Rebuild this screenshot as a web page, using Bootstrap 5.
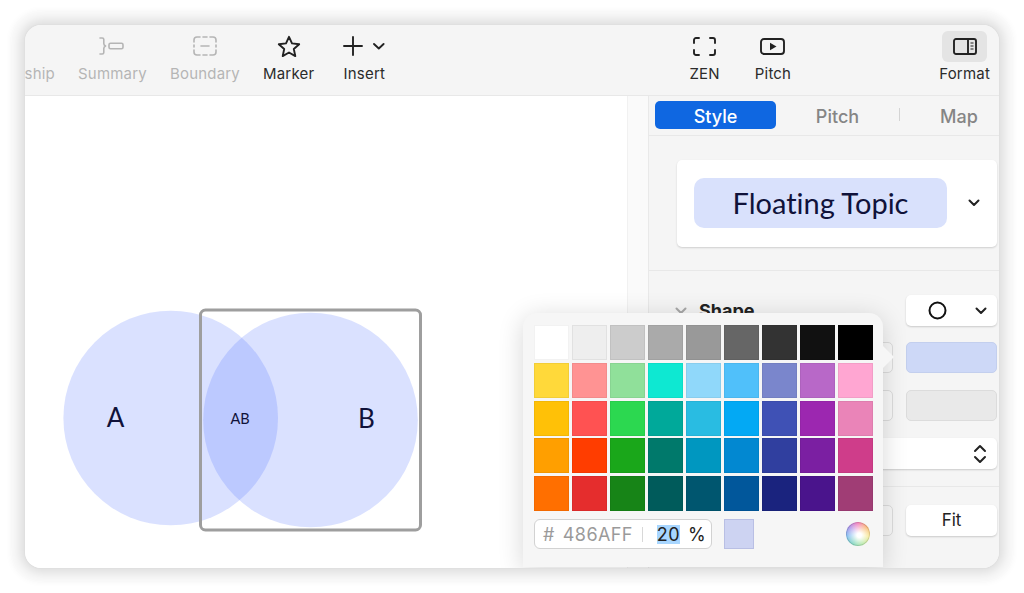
<!DOCTYPE html>
<html lang="en">
<head>
  <meta charset="UTF-8" />
  <meta name="viewport" content="width=device-width, initial-scale=1.0"/>
  <title>Venn diagram - Format panel</title>
  <link href="https://cdn.jsdelivr.net/npm/bootstrap@5.3.2/dist/css/bootstrap.min.css" rel="stylesheet"/>
  <style>
    html, body { height: 593px; overflow: hidden; }
    body { background: #fff; padding: 25px; font-family: Inter, "Liberation Sans", sans-serif; color: #222; }

    .app-window {
      width: 974px; height: 543px; border-radius: 16px; overflow: hidden; background: #f5f5f5;
      box-shadow: 0 0 0 1px #e0e0e0, 0 0 12px 5px rgba(0, 0, 0, .12), 0 0 5px 16px #fafafa;
    }

    .app-toolbar { height: 71px; flex: none; background: #f5f5f5; border-bottom: 1px solid #e8e8e8; padding-right: 9px; }
    .tool-left { gap: 23px; margin-left: -12px; }
    .tool-right { margin-left: auto; }
    .tool-item { height: 70px; font-size: 15px; letter-spacing: .2px; line-height: 18px; color: #2b2b2b; }
    .tool-item.is-off { color: #b5b5b5; }
    .tool-ico { height: 38px; display: flex; align-items: center; justify-content: center; margin-top: 2px; }
    .tool-clip { width: 42px; text-align: right; }
    .tool-zen { margin-right: 35px; }
    .tool-pitch { margin-right: 148px; }
    .tool-active { width: 45px; height: 31px; border-radius: 6px; background: #e4e4e4; margin-top: 6px; margin-bottom: 3px; }
    .tool-insert { margin-left: 6px; }

    .app-canvas { width: 602px; flex: none; background: #fff; position: relative; }
    .app-gutter { width: 22px; flex: none; background: #fafafa; border-left: 1px solid #f1f1f1; border-right: 1px solid #e9e9e9; }
    .app-panel { flex: 1 1 auto; background: #f5f5f5; min-width: 0; }

    .venn-art { position: absolute; left: 0; top: 0; }
    .venn-label { font-family: Lato, "Open Sans", sans-serif; fill: #10123a; }

    .panel-tabs { height: 40px; border-bottom: 1px solid #e8e8e8; padding: 5px 0 0 6px; font-size: 18px; font-weight: 500; color: #858585; }
    .panel-tab { height: 28px; line-height: 31px; text-align: center; flex: none; }
    .panel-tab.is-on { width: 121px; background: #0f67e1; color: #fff; border-radius: 5px; font-weight: 500; }
    .panel-tab.t-pitch { width: 123px; }
    .panel-tab.t-sep { width: 1px; height: 13px; background: #d4d4d4; margin-top: 7px; }
    .panel-tab.t-map { flex: 1 1 auto; padding-left: 19px; }

    .topic-card { margin: 24px 2px 0 28px; height: 87px; padding: 18px 0 0 17px; background: #fff; border-radius: 5px; box-shadow: 0 1px 2px rgba(0, 0, 0, .16); }
    .topic-pill { width: 253px; height: 50px; background: #d9e1fc; border-radius: 10px; font-family: Lato, "Open Sans", sans-serif; font-variant-ligatures: none; font-size: 29px; color: #10123a; }
    .topic-chev { margin-left: 21px; height: 50px; }

    .panel-line { height: 1px; background: #e8e8e8; margin-top: 23px; }
    .panel-line.is-low { margin-top: 17px; }
    .shape-row { padding: 24px 2px 0 26px; }
    .shape-name { font-size: 18px; font-weight: 700; margin-left: 12px; line-height: 28px; }
    .ctl-btn { width: 91px; height: 31px; background: #fff; border-radius: 5px; box-shadow: 0 1px 2px rgba(0, 0, 0, .18); flex: none; }
    .ctl-shape { padding-left: 22px; gap: 28px; }
    .ctl-blue { background: #cdd8f7; border: 1px solid #c3cfee; box-shadow: none; }
    .ctl-grey { background: #e9e9e9; border: 1px solid #dcdcdc; box-shadow: none; }
    .ctl-ghost { width: 91px; height: 31px; background: #f7f7f7; border: 1px solid #dcdcdc; border-radius: 5px; flex: none; }
    .ctl-row { padding-right: 2px; gap: 13px; margin-top: 17px; }
    .ctl-row.is-first { margin-top: 16px; }
    .ctl-fit { margin-top: 18px; }
    .ctl-wide { width: 140px; justify-content: flex-end; padding-right: 10px; }
    .fit-btn { font-size: 17px; color: #222; }

    .color-pop {
      position: absolute; left: 498px; top: 217px; width: 360px; height: 254px; padding: 12px 11px 0;
      background: #f6f6f6; border-radius: 14px 14px 0 0; box-shadow: 0 4px 26px rgba(0, 0, 0, .16); z-index: 5;
    }
    .color-pop::after {
      content: ""; position: absolute; right: -11px; top: 33px; width: 0; height: 0;
      border-left: 11px solid #f6f6f6; border-top: 11px solid transparent; border-bottom: 11px solid transparent;
    }
    .swatch-grid { display: grid; grid-template-columns: repeat(9, 35px); grid-auto-rows: 35px; gap: 2.8px 3px; }
    .swatch-cell { box-shadow: inset 0 0 0 1px rgba(0, 0, 0, .05); }
    .pop-foot { margin-top: 8px; }
    .hex-box { width: 178px; height: 30px; background: #fff; border: 1.5px solid #d2d2d2; border-radius: 6px; padding: 0 4px 0 8px; font-size: 18px; color: #9a9a9a; letter-spacing: .4px; white-space: nowrap; }
    .hex-sep { width: 1px; height: 15px; background: #d8d8d8; margin: 0 14px 0 9px; flex: none; }
    .hex-pct { background: #a8d6ff; color: #222; line-height: 19px; margin-right: 8px; }
    .hex-unit { color: #222; }
    .preview-box { width: 30px; height: 30px; margin-left: 12px; background: #cdd3f2; border: 1px solid #b9bfe4; }
    .wheel-ball {
      width: 24px; height: 24px; border-radius: 50%; margin-left: auto; margin-right: 2px;
      background: radial-gradient(circle at 55% 55%, #fff 0 12%, rgba(255, 255, 255, .35) 55%, rgba(255, 255, 255, 0) 75%),
        conic-gradient(#f26fb2, #f7a14d, #f4e268, #8fdc7a, #59c9a9, #72b6ef, #a48be8, #f26fb2);
      box-shadow: inset 0 0 0 1px rgba(0, 0, 0, .12);
    }
  </style>
</head>
<body>

<div class="app-window d-flex flex-column">

  <div class="app-toolbar d-flex">
    <div class="tool-left d-flex">
      <div class="tool-item is-off tool-clip d-flex flex-column align-items-end"><div class="tool-ico"></div><span>ship</span></div>
      <div class="tool-item is-off d-flex flex-column align-items-center">
        <div class="tool-ico">
          <svg width="26" height="20" viewBox="0 0 26 20" fill="none" stroke="#b5b5b5" stroke-width="1.6" stroke-linecap="round" stroke-linejoin="round"><path d="M1 2h2.200c1 0 1.600.6 1.600 1.600v4c0 1 .6 1.900 1.800 2.400-1.200.5-1.800 1.400-1.800 2.400v4c0 1-.6 1.600-1.600 1.600H1"/><rect x="10" y="7.200" width="14" height="5.600" rx="1.500"/></svg>
        </div>
        <span>Summary</span>
      </div>
      <div class="tool-item is-off d-flex flex-column align-items-center">
        <div class="tool-ico">
          <svg width="24" height="20" viewBox="0 0 24 20" fill="none" stroke="#b5b5b5" stroke-width="1.6" stroke-linecap="round"><path d="M1 6V4a3 3 0 0 1 3-3h3M17 1h3a3 3 0 0 1 3 3v2M23 14v2a3 3 0 0 1-3 3h-3M7 19H4a3 3 0 0 1-3-3v-2M10 1h4M10 19h4M1 9v2M23 9v2M8 10h8"/></svg>
        </div>
        <span>Boundary</span>
      </div>
      <div class="tool-item d-flex flex-column align-items-center">
        <div class="tool-ico">
          <svg width="24" height="23" viewBox="0 0 24 23" fill="none" stroke="#222" stroke-width="1.9" stroke-linejoin="round"><path d="M12 1.800l3 6.600 7.200.8-5.400 4.800 1.500 7.100-6.300-3.600-6.300 3.600 1.500-7.100L1.800 9.200 9 8.400z"/></svg>
        </div>
        <span>Marker</span>
      </div>
      <div class="tool-item tool-insert d-flex flex-column align-items-center">
        <div class="tool-ico">
          <svg width="42" height="20" viewBox="0 0 42 20" fill="none" stroke="#222" stroke-linecap="round" stroke-linejoin="round"><path d="M10 1v18M1 10h18" stroke-width="1.9"/><path d="M31 8l4.800 4.500L40.600 8" stroke-width="1.900"/></svg>
        </div>
        <span>Insert</span>
      </div>
    </div>
    <div class="tool-right d-flex">
      <div class="tool-item tool-zen d-flex flex-column align-items-center">
        <div class="tool-ico">
          <svg width="23" height="19" viewBox="0 0 23 19" fill="none" stroke="#222" stroke-width="1.900" stroke-linecap="round"><path d="M1 6V3a2 2 0 0 1 2-2h3M17 1h3a2 2 0 0 1 2 2v3M22 13v3a2 2 0 0 1-2 2h-3M6 18H3a2 2 0 0 1-2-2v-3"/></svg>
        </div>
        <span>ZEN</span>
      </div>
      <div class="tool-item tool-pitch d-flex flex-column align-items-center">
        <div class="tool-ico">
          <svg width="25" height="17" viewBox="0 0 25 17" fill="none"><rect x="1" y="1" width="23" height="15" rx="3" stroke="#222" stroke-width="1.900"/><path d="M10 4.800l6.500 3.700-6.500 3.700z" fill="#222"/></svg>
        </div>
        <span>Pitch</span>
      </div>
      <div class="tool-item d-flex flex-column align-items-center">
        <div class="tool-active d-flex align-items-center justify-content-center">
          <svg width="24" height="17" viewBox="0 0 24 17" fill="none" stroke="#222"><rect x="1" y="1" width="22" height="15" rx="2" stroke-width="1.900"/><path d="M15 1v15" stroke-width="1.900"/><path d="M17.500 5h3M17.500 8h3M17.500 11h3" stroke-width="1.200"/></svg>
        </div>
        <span>Format</span>
      </div>
    </div>
  </div>

  <div class="d-flex flex-grow-1 position-relative" style="min-height:0">
    <div class="app-canvas">
      <svg class="venn-art" width="602" height="472" viewBox="25 96 602 472">
        <circle cx="170.700" cy="418" r="107.300" fill="#486aff" fill-opacity=".2"/>
        <circle cx="310.500" cy="420" r="107.300" fill="#486aff" fill-opacity=".2"/>
        <rect x="200.500" y="310" width="220" height="220" rx="5" fill="none" stroke="#9e9e9e" stroke-width="3"/>
        <text class="venn-label" x="115.500" y="427" font-size="26" text-anchor="middle">A</text>
        <text class="venn-label" x="240" y="424" font-size="14.500" text-anchor="middle">AB</text>
        <text class="venn-label" x="366.500" y="428" font-size="26" text-anchor="middle">B</text>
      </svg>
    </div>
    <div class="app-gutter"></div>
    <div class="app-panel">
      <div class="panel-tabs d-flex">
        <div class="panel-tab is-on">Style</div>
        <div class="panel-tab t-pitch">Pitch</div>
        <div class="panel-tab t-sep"></div>
        <div class="panel-tab t-map">Map</div>
      </div>

      <div class="topic-card d-flex">
        <div class="topic-pill d-flex align-items-center justify-content-center">Floating Topic</div>
        <div class="topic-chev d-flex align-items-center">
          <svg width="12" height="8" viewBox="0 0 12 8" fill="none" stroke="#222" stroke-width="2" stroke-linecap="round" stroke-linejoin="round"><path d="M1.500 1.500L6 6l4.500-4.500"/></svg>
        </div>
      </div>

      <div class="panel-line"></div>

      <div class="shape-row d-flex align-items-center justify-content-between">
        <div class="d-flex align-items-center">
          <svg width="12" height="8" viewBox="0 0 12 8" fill="none" stroke="#a8a8a8" stroke-width="2" stroke-linecap="round" stroke-linejoin="round"><path d="M1.500 1.500L6 6l4.500-4.500"/></svg>
          <span class="shape-name">Shape</span>
        </div>
        <div class="ctl-btn ctl-shape d-flex align-items-center">
          <svg width="19" height="19" viewBox="0 0 19 19" fill="none" stroke="#111" stroke-width="2"><circle cx="9.500" cy="9.500" r="8"/></svg>
          <svg width="12" height="8" viewBox="0 0 12 8" fill="none" stroke="#222" stroke-width="2" stroke-linecap="round" stroke-linejoin="round"><path d="M1.500 1.500L6 6l4.500-4.500"/></svg>
        </div>
      </div>

      <div class="ctl-row is-first d-flex justify-content-end">
        <div class="ctl-ghost"></div>
        <div class="ctl-btn ctl-blue"></div>
      </div>
      <div class="ctl-row d-flex justify-content-end">
        <div class="ctl-ghost"></div>
        <div class="ctl-btn ctl-grey"></div>
      </div>
      <div class="ctl-row d-flex justify-content-end">
        <div class="ctl-btn ctl-wide d-flex align-items-center">
          <svg width="14" height="20" viewBox="0 0 14 20" fill="none" stroke="#222" stroke-width="2" stroke-linecap="round" stroke-linejoin="round"><path d="M2 7l5-5 5 5M2 13l5 5 5-5"/></svg>
        </div>
      </div>

      <div class="panel-line is-low"></div>

      <div class="ctl-row ctl-fit d-flex justify-content-end">
        <div class="ctl-ghost"></div>
        <div class="ctl-btn fit-btn d-flex align-items-center justify-content-center">Fit</div>
      </div>
    </div>

    <div class="color-pop">
      <div class="swatch-grid" id="swatchGrid"></div>
      <div class="pop-foot d-flex align-items-center">
        <div class="hex-box d-flex align-items-center">
          <span class="me-2">#</span><span>486AFF</span><span class="hex-sep"></span><span class="hex-pct">20</span><span class="hex-unit">%</span>
        </div>
        <div class="preview-box"></div>
        <div class="wheel-ball"></div>
      </div>
    </div>
  </div>
</div>

<script src="https://cdn.jsdelivr.net/npm/bootstrap@5.3.2/dist/js/bootstrap.bundle.min.js"></script>
<script>
  const swatches = [
    '#ffffff', '#eeeeee', '#cccccc', '#aaaaaa', '#999999', '#666666', '#333333', '#111111', '#000000',
    '#ffd93a', '#ff9393', '#90e09a', '#0ee8d2', '#90d8fa', '#50c0fa', '#7a86cc', '#b868c8', '#ffa6d2',
    '#ffc107', '#ff5252', '#2cd850', '#00a99a', '#29bce2', '#03a9f4', '#3f51b5', '#9c27b0', '#ea84b8',
    '#ff9f00', '#ff3d00', '#1aa71a', '#00796b', '#0097c0', '#0288d1', '#303f9f', '#7b1fa2', '#cf3d8a',
    '#ff6f00', '#e52d2d', '#178417', '#005b5b', '#00566f', '#01579b', '#1a237e', '#4a148c', '#a03d75'
  ];
  document.getElementById('swatchGrid').innerHTML = swatches
    .map(c => `<div class="swatch-cell" style="background:${c}"></div>`)
    .join('');
</script>

</body>
</html>
